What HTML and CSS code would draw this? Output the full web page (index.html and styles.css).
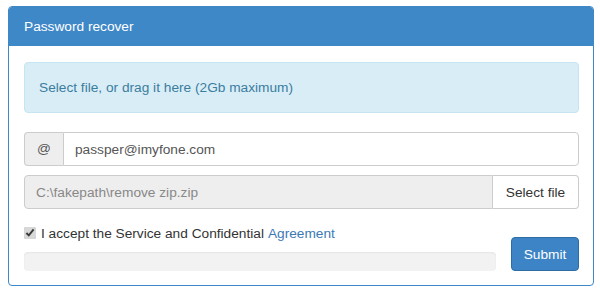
FILE: index.html
```html
<!DOCTYPE html>
<html lang="en">
<head>
  <meta charset="UTF-8">
  <title>Password recover</title>
  <link rel="stylesheet" href="styles.css">
</head>
<body>
  <div class="panel">
    <div class="panel-heading">Password recover</div>
    <div class="panel-body">
      <div class="drop-zone">Select file, or drag it here (2Gb maximum)</div>

      <div class="input-group">
        <span class="addon">@</span>
        <input class="field" type="text" value="passper@imyfone.com">
      </div>

      <div class="input-group file-row">
        <input class="field readonly" type="text" value="C:\fakepath\remove zip.zip" readonly>
        <button class="btn-default">Select file</button>
      </div>

      <div class="bottom-row">
        <div class="left-col">
          <label class="check"><input type="checkbox" checked> I accept the Service and Confidential <a href="#">Agreement</a></label>
          <div class="progress"></div>
        </div>
        <button class="btn-primary">Submit</button>
      </div>
    </div>
  </div>
</body>
</html>
```

FILE: styles.css
```css
body { margin: 0; padding: 6px 6px 0 8px; font-family: "Liberation Sans", Arial, sans-serif; font-size: 13.7px; color: #333; background: #fff; }
.panel { border: 1px solid #3f88c7; border-radius: 4px; width: 584px; }
.panel-heading { background: #3f88c7; color: #fff; height: 39px; line-height: 40px; padding: 0 15px; border-radius: 3px 3px 0 0; }
.panel-body { padding: 16px 14px 14px 15px; }
.drop-zone { background: #d9edf7; border: 1px solid #c6e4f1; border-radius: 4px; color: #3b7d9e; padding: 0 14px; height: 49px; line-height: 50px; }
.input-group { display: flex; height: 34px; margin-top: 19px; }
.file-row { margin-top: 9px; }
.addon { width: 38px; background: #eee; border: 1px solid #ccc; border-right: none; border-radius: 4px 0 0 4px; text-align: center; line-height: 32px; color: #555; }
.field { flex: 1; min-width: 0; border: 1px solid #ccc; border-radius: 0 4px 4px 0; padding: 0 11px; font: inherit; color: #555; box-sizing: border-box; height: 34px; }
.field.readonly { background: #eee; color: #888; border-radius: 4px 0 0 4px; }
.btn-default { width: 86px; background: #fff; border: 1px solid #ccc; border-left: none; border-radius: 0 4px 4px 0; font: inherit; color: #333; padding: 0; }
.bottom-row { display: flex; justify-content: space-between; align-items: flex-end; margin-top: 14px; }
.left-col { width: 472px; }
.check { display: flex; align-items: center; height: 20px; color: #333; }
.check input { margin: 0 5px 0 0; width: 12px; height: 12px; accent-color: #d8d8d8; }
.check a { color: #3d7ab5; text-decoration: none; margin-left: 4px; }
.progress { height: 19px; background: #f2f2f2; border-radius: 4px; margin-top: 9px; box-shadow: inset 0 1px 2px rgba(0,0,0,0.06); }
.btn-primary { width: 68px; height: 34px; background: #3d84c6; border: 1px solid #2e6da4; border-radius: 4px; color: #fff; font: inherit; padding: 0; }
```
